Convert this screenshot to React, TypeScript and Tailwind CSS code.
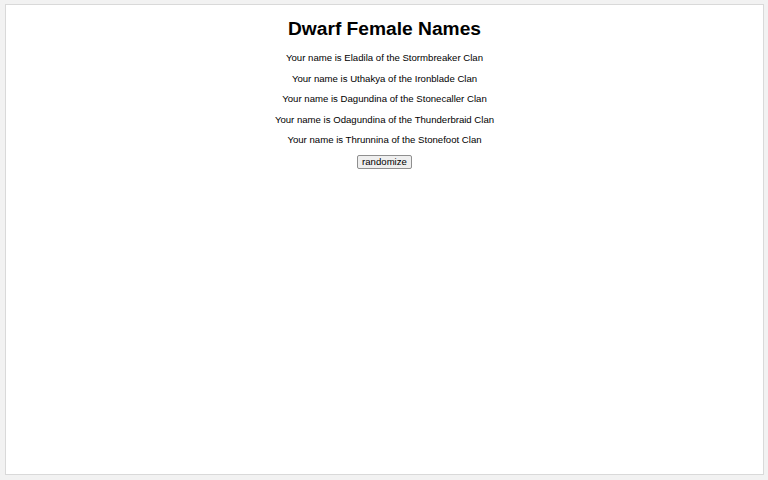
const NAMES = [
  'Eladila of the Stormbreaker Clan',
  'Uthakya of the Ironblade Clan',
  'Dagundina of the Stonecaller Clan',
  'Odagundina of the Thunderbraid Clan',
  'Thrunnina of the Stonefoot Clan',
];

export default function App() {
  return (
    <div className="h-[480px] bg-[#f2f2f2] px-[4px] pt-[4px] pb-[5px] font-['Liberation_Sans',Arial,sans-serif] text-black">
      <div className="ml-px h-[471px] w-[759px] border border-[#d9d9d9] bg-white flex flex-col items-center">
        <h1 className="mt-[13px] text-[19.2px] font-bold leading-[22px]">Dwarf Female Names</h1>
        <div className="mt-[8px] flex flex-col items-center">
          {NAMES.map(n => (
            <p key={n} className="text-[9.6px] leading-[20.5px]">Your name is {n}</p>
          ))}
        </div>
        <button className="mt-[4px] h-[14px] px-[4px] border border-[#8f8f8f] bg-[#efefef] rounded-[2px] text-[9.6px] leading-[12px]">
          randomize
        </button>
      </div>
    </div>
  );
}
